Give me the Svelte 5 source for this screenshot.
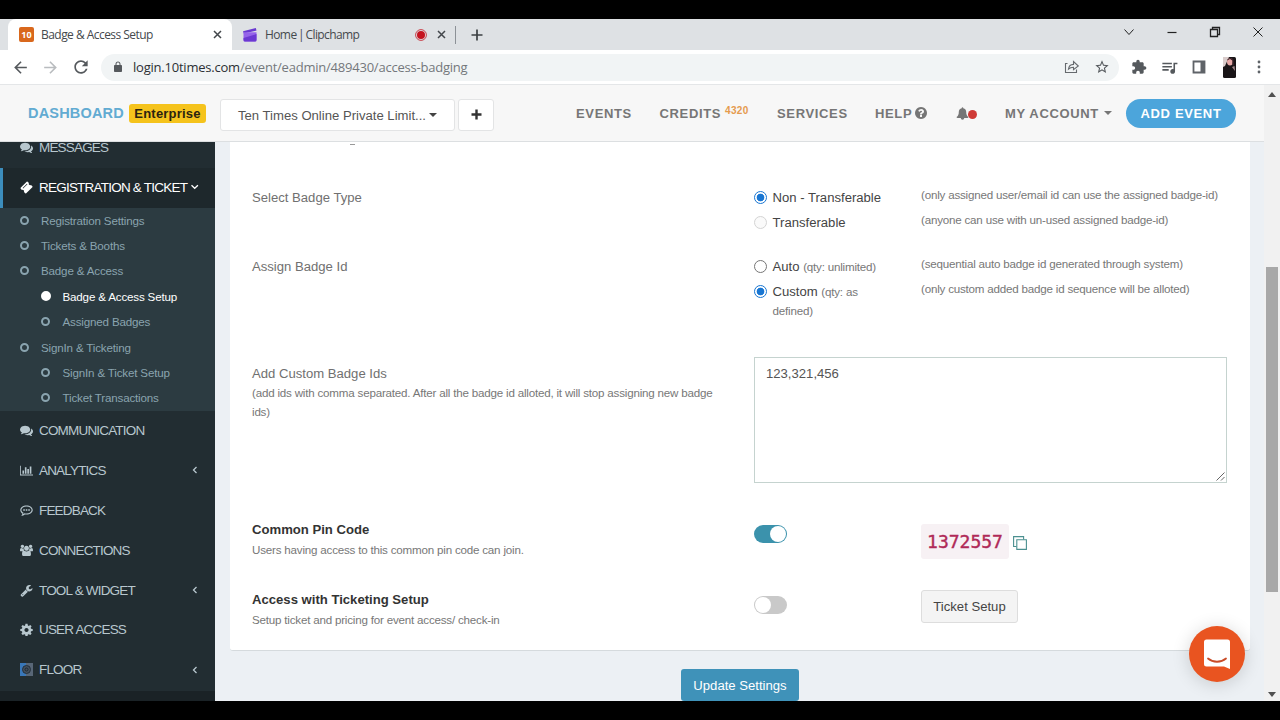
<script>
  const P = {
    comments: ['0 0 1792 1792', 'M1408 768q0 139-94 257t-256.5 186.5-353.5 68.5q-86 0-176-16-124 88-278 128-36 9-86 16h-3q-11 0-20.5-8t-11.5-21q-1-3-1-6.5t.5-6.5 2-6l2.5-5 3.5-5.5 4-5 4.5-5 4-4.5q5-6 23-25t26-29.5 22.5-29 25-38.5 20.5-44q-124-72-195-177t-71-224q0-139 94-257t256.5-186.5 353.5-68.5 353.5 68.5 256.5 186.5 94 257zm384 256q0 120-71 224.5t-195 176.5q10 24 20.5 44t25 38.5 22.5 29 26 29.5 23 25q1 1 4 4.5t4.5 5 4 5 3.5 5.5l2.5 5 2 6 .5 6.5-1 6.5q-3 14-13 22t-22 7q-50-7-86-16-154-40-278-128-90 16-176 16-271 0-472-132 58 4 88 4 161 0 309-45t264-129q125-92 192-212t67-254q0-77-23-152 129 71 204 178t75 230z'],
    chart: ['0 0 2048 1792', 'M640 896v512h-256v-512h256zm384-512v1024h-256v-1024h256zm1024 1152v128h-2048v-1536h128v1408h1920zm-640-896v768h-256v-768h256zm384-384v1152h-256v-1152h256z'],
    wrench: ['0 0 1792 1792', 'M448 1472q0-26-19-45t-45-19-45 19-19 45 19 45 45 19 45-19 19-45zm644-420l-682 682q-37 37-90 37-52 0-91-37l-106-108q-38-36-38-90 0-53 38-91l681-681q39 98 114.5 173.5t173.5 114.5zm634-435q0 39-23 106-47 134-164.5 217.5t-258.5 83.5q-185 0-316.5-131.5t-131.5-316.5 131.5-316.5 316.5-131.5q58 0 121.5 16.5t107.5 46.5q16 11 16 28t-16 28l-293 169v224l193 107q5-3 79-48.5t135.5-81 70.5-35.5q15 0 23.5 10t8.5 25z'],
    ticket: ['0 0 14 14', 'M8.2.7l1.4 1.4a1.6 1.6 0 0 0 2.2 2.2l1.5 1.4q.5.5 0 1L6.7 13.300q-.5.5-1 0l-1.500-1.400a1.6 1.6 0 0 0-2.200-2.200L.7 8.200q-.5-.5 0-1L7.200.7q.5-.5 1 0zM7.500 2.900L2.900 7.500l.5.5L8 3.400z'],
    feedback: ['0 0 14 14', 'M7 1.500C3.200 1.500.3 3.700.3 6.500c0 1.600.9 3 2.400 3.900-.2.900-.7 1.500-1.400 2.200 1.500 0 2.900-.6 3.900-1.400.6.1 1.200.2 1.800.2 3.800 0 6.700-2.200 6.700-4.900S10.800 1.500 7 1.500zm0 1.200c3.100 0 5.500 1.700 5.500 3.800s-2.400 3.700-5.500 3.700c-.7 0-1.500-.1-2.200-.3-.5.500-1.100.8-1.700 1 .3-.4.500-.9.700-1.400C2.400 8.800 1.500 7.700 1.500 6.500c0-2.100 2.400-3.800 5.500-3.800zM3.500 5.600h1.700v1.700H3.500zM6.200 5.600h1.700v1.700H6.200zM8.900 5.600h1.700v1.700H8.900z'],
    users: ['0 0 14 14', 'M2.600 .8a1.800 1.800 0 1 0 .01 0zM11.400 .8a1.800 1.800 0 1 0 .01 0zM7 2a2.600 2.600 0 1 0 .01 0zM0 7.200c0-1.500.3-2.800 1.400-2.800.4 0 .8.500 1.800.4.300 0 .5 0 .7-.1 0 1 .2 1.600.6 2.200-.8 0-1.500.3-2 .9H1.200c-.8 0-1.200-.2-1.200-.6zM14 7.200c0-1.500-.3-2.800-1.400-2.800-.4 0-.8.500-1.800.4-.3 0-.5 0-.7-.1 0 1-.2 1.600-.6 2.200.8 0 1.500.3 2 .9h1.300c.8 0 1.200-.2 1.200-.6zM2.200 11c0-2 .3-3.900 2.100-3.900.7 0 1.200.9 2.700.9s2-.9 2.700-.9c1.800 0 2.100 1.900 2.100 3.900 0 1.300-.7 2-1.900 2H4.100c-1.200 0-1.900-.7-1.900-2z'],
    cog: ['0 0 14 14', 'M5.900.900h2.200l.4 1.800 1 .4 1.500-1 1.500 1.500-1 1.500.4 1 1.800.4v2.100l-1.800.4-.4 1 1 1.500-1.500 1.500-1.500-1-1 .4-.4 1.800H5.900l-.4-1.800-1-.4-1.500 1L1.500 11.500l1-1.500-.4-1-1.800-.4V6.500l1.800-.4.4-1-1-1.500L3 2.100l1.500 1 1-.4zM7 5.300a2.200 2.200 0 1 0 .01 0z'],
    help: ['128 128 1536 1536', 'M1024 1376v-192q0-14-9-23t-23-9h-192q-14 0-23 9t-9 23v192q0 14 9 23t23 9h192q14 0 23-9t9-23zm256-672q0-88-55.5-163t-138.5-116-170-41q-243 0-371 213-15 24 8 42l132 100q7 6 19 6 16 0 25-12 53-68 86-92 34-24 86-24 48 0 85.500 26t37.500 59q0 38-20 61t-68 45q-63 28-115.500 86.500t-52.500 125.500v36q0 14 9 23t23 9h192q14 0 23-9t9-23q0-19 21.500-49.500t54.500-49.500q32-18 49-28.500t46-35 44.500-48 28-60.500 12.500-81zm384 192q0 209-103 385.500t-279.500 279.500-385.500 103-385.500-103-279.500-279.500-103-385.500 103-385.500 279.500-279.500 385.500-103 385.500 103 279.500 279.500 103 385.500z'],
    bell: ['0 0 14 14', 'M7 .3c.5 0 .8.300.8.800v.3c2.100.4 3.200 2 3.200 4 0 2.800.8 4.200 2.400 5.400 0 .6-.4 1-1 1H8.900a1.900 1.900 0 0 1-3.800 0H1.600c-.6 0-1-.4-1-1C2.200 9.600 3 8.200 3 5.400c0-2 1.100-3.600 3.200-4v-.3c0-.5.300-.8.8-.8z'],
    back: ['0 0 24 24', 'M20 11H7.830l5.590-5.590L12 4l-8 8 8 8 1.410-1.410L7.830 13H20v-2z'],
    forward: ['0 0 24 24', 'M4 11h12.170l-5.590-5.590L12 4l8 8-8 8-1.410-1.410L16.170 13H4v-2z'],
    reload: ['0 0 24 24', 'M17.650 6.350C16.200 4.900 14.210 4 12 4c-4.420 0-7.990 3.580-7.990 8s3.570 8 7.990 8c3.730 0 6.840-2.550 7.730-6h-2.080c-.82 2.330-3.040 4-5.650 4-3.310 0-6-2.690-6-6s2.690-6 6-6c1.660 0 3.140.690 4.220 1.780L13 11h7V4l-2.350 2.350z'],
    lock: ['0 0 24 24', 'M18 8h-1V6c0-2.760-2.240-5-5-5S7 3.240 7 6v2H6c-1.100 0-2 .9-2 2v10c0 1.100.9 2 2 2h12c1.100 0 2-.9 2-2V10c0-1.100-.9-2-2-2zM9 8V6c0-1.660 1.340-3 3-3s3 1.340 3 3v2H9z'],
    star: ['0 0 24 24', 'M22 9.240l-7.190-.62L12 2 9.190 8.630 2 9.240l5.460 4.730L5.820 21 12 17.270 18.180 21l-1.630-7.030L22 9.240zM12 15.400l-3.760 2.270 1-4.280-3.320-2.880 4.380-.38L12 6.100l1.710 4.040 4.380.38-3.320 2.880 1 4.280L12 15.400z'],
    puzzle: ['0 0 24 24', 'M20.500 11H19V7c0-1.100-.9-2-2-2h-4V3.500C13 2.120 11.880 1 10.500 1S8 2.120 8 3.500V5H4c-1.100 0-1.990.9-1.990 2v3.800H3.500c1.490 0 2.700 1.210 2.700 2.700s-1.210 2.700-2.700 2.700H2V20c0 1.100.9 2 2 2h3.800v-1.500c0-1.490 1.210-2.700 2.700-2.700 1.490 0 2.700 1.210 2.700 2.700V22H17c1.100 0 2-.9 2-2v-4h1.500c1.380 0 2.500-1.120 2.500-2.500S21.880 11 20.500 11z'],
    queue: ['0 0 24 24', 'M15 6H3v2h12V6zm0 4H3v2h12v-2zM3 16h8v-2H3v2zM17 6v8.180c-.31-.11-.65-.18-1-.18-1.660 0-3 1.340-3 3s1.340 3 3 3 3-1.340 3-3V8h3V6h-5z']
  };
  const evenodd = ['cog', 'ticket', 'feedback'];
  const sub = [
    { t: 'Registration Settings' },
    { t: 'Tickets & Booths' },
    { t: 'Badge & Access' },
    { t: 'Badge & Access Setup', deep: true, on: true },
    { t: 'Assigned Badges', deep: true },
    { t: 'SignIn & Ticketing' },
    { t: 'SignIn & Ticket Setup', deep: true },
    { t: 'Ticket Transactions', deep: true }
  ];
  const menu = [
    { t: 'COMMUNICATION', i: 'comments' },
    { t: 'ANALYTICS', i: 'chart', more: true },
    { t: 'FEEDBACK', i: 'feedback' },
    { t: 'CONNECTIONS', i: 'users' },
    { t: 'TOOL & WIDGET', i: 'wrench', more: true },
    { t: 'USER ACCESS', i: 'cog' },
    { t: 'FLOOR', i: 'floor', more: true }
  ];
</script>

{#snippet icon(name, size)}
  <svg width={size} height={size} viewBox={P[name][0]} fill="currentColor" fill-rule={evenodd.includes(name) ? 'evenodd' : 'nonzero'}><path d={P[name][1]} /></svg>
{/snippet}

<div class="screen">
  <div class="tabs">
    <div class="tab active">
      <span class="fav">10</span>
      <span class="ttl t1">Badge &amp; Access Setup</span>
      <svg class="x" width="9" height="9" viewBox="0 0 9 9"><path d="M1 1l7 7M8 1L1 8" /></svg>
    </div>
    <div class="tab second">
      <svg width="14" height="14" viewBox="0 0 14 14"><path d="M0 3.200L12.800 0l.7 2.600L.7 5.400z" fill="#6a39d0" /><path d="M.5 4.300h13V12a1.500 1.500 0 0 1-1.500 1.500H2A1.500 1.500 0 0 1 .5 12z" fill="#9563ea" /><path d="M.5 10L13.500 6v6a1.500 1.500 0 0 1-1.500 1.500H2A1.500 1.500 0 0 1 .5 12z" fill="#6b39d2" /></svg>
      <span class="ttl t2">Home | Clipchamp</span>
      <svg class="rec" width="12" height="12" viewBox="0 0 12 12"><circle cx="6" cy="6" r="5.400" fill="none" stroke="#c9404a" /><circle cx="6" cy="6" r="4" fill="#c5131f" /></svg>
      <svg class="x" width="9" height="9" viewBox="0 0 9 9"><path d="M1 1l7 7M8 1L1 8" /></svg>
    </div>
    <span class="vsep"></span>
    <svg class="plus" width="12" height="12" viewBox="0 0 12 12"><path d="M6 0.500v11M.5 6h11" /></svg>
    <div class="win">
      <svg width="12" height="12" viewBox="0 0 12 12"><path d="M1.500 3.500L6 8.500l4.500-5" /></svg>
      <svg width="12" height="12" viewBox="0 0 12 12"><path d="M1.500 6.500h9" stroke-width="1.200" /></svg>
      <svg width="12" height="12" viewBox="0 0 12 12"><path d="M1.500 3.500h7v7h-7zM3.500 3.500v-2h7v7h-2" stroke-width="1.300" /></svg>
      <svg width="12" height="12" viewBox="0 0 12 12"><path d="M1.500 1.500l9 9M10.500 1.500l-9 9" /></svg>
    </div>
  </div>

  <div class="toolbar">
    <span class="nav">{@render icon('back', 19)}</span>
    <span class="nav dim">{@render icon('forward', 19)}</span>
    <span class="nav">{@render icon('reload', 20)}</span>
    <div class="omni">
      {@render icon('lock', 12)}
      <span class="url"><b>login.10times.com</b>/event/eadmin/489430/access-badging</span>
      <svg class="share" width="16" height="14" viewBox="0 0 16 14"><path d="M3.500 3.500h-2v9h11v-3" /><path d="M4.500 9c.4-3 2.300-4.500 5-4.600V1.600L14.300 6 9.500 9.700V7.200C7.500 7.200 5.800 7.700 4.500 9z" /></svg>
      {@render icon('star', 16)}
    </div>
    <div class="ext">
      {@render icon('puzzle', 16)}
      {@render icon('queue', 19)}
      <svg width="14" height="14" viewBox="0 0 14 14"><path d="M1.500 1.500h11v11h-11z" fill="none" stroke="#5f6368" stroke-width="1.800" /><path d="M8.500 1h4.500v12H8.500z" fill="#5f6368" /></svg>
      <svg width="13" height="21" viewBox="0 0 13 21"><rect width="13" height="21" rx="1.500" fill="#191517" /><path d="M0 0h6L2 9 0 10z" fill="#d9cccb" /><ellipse cx="7" cy="4.700" rx="3" ry="3.800" fill="#e9aaa8" /><path d="M4 3.500C4.500.500 9 0 10.500 2.500L11 9 9.200 7 9.300 3.500 7 2z" fill="#3a2228" /><path d="M9 10l2.500-1 .5 5z" fill="#a98c90" /></svg>
      <svg width="4" height="14" viewBox="0 0 4 14" fill="#5f6368"><circle cx="2" cy="2" r="1.400" /><circle cx="2" cy="7" r="1.400" /><circle cx="2" cy="12" r="1.400" /></svg>
    </div>
  </div>

  <div class="view">
    <div class="page">
      <header>
        <span class="brand">DASHBOARD</span>
        <span class="plan">Enterprise</span>
        <div class="org"><span>Ten Times Online Private Limit...</span><i class="caret"></i></div>
        <div class="add"><svg width="11" height="11" viewBox="0 0 11 11"><path d="M5.500 0.500v10M.5 5.500h10" stroke="#333" stroke-width="2.400" /></svg></div>
        <nav>
          <span>EVENTS</span>
          <span>CREDITS<sup>4320</sup></span>
          <span>SERVICES</span>
          <span class="help">HELP {@render icon('help', 12)}</span>
          <span class="bell">{@render icon('bell', 13)}<i></i></span>
          <span class="acct">MY ACCOUNT<i class="caret"></i></span>
          <span class="cta">ADD EVENT</span>
        </nav>
      </header>

      <div class="body">
        <aside>
          <div class="item first">{@render icon('comments', 13)}<span>MESSAGES</span></div>
          <div class="item open">{@render icon('ticket', 13)}<span>REGISTRATION &amp; TICKET</span><svg class="chev" width="8" height="8" viewBox="0 0 8 8"><path d="M.5 2.300l3.200 3 3.200-3" /></svg></div>
          <div class="sub">
            {#each sub as s}
              <div class="srow" class:deep={s.deep} class:on={s.on}><i></i><span>{s.t}</span></div>
            {/each}
          </div>
          {#each menu as m}
            <div class="item">
              {#if m.i === 'floor'}
                <svg width="13" height="13" viewBox="0 0 13 13"><rect width="13" height="13" fill="#586676" /><rect width="6" height="13" fill="#3977b8" /><circle cx="6.500" cy="6.500" r="4" fill="#45505c" stroke="#222f3b" /><circle cx="6.500" cy="6.500" r="1.500" fill="none" stroke="#1c2935" /></svg>
              {:else}
                {@render icon(m.i, 13)}
              {/if}
              <span>{m.t}</span>
              {#if m.more}<svg class="chev" width="8" height="8" viewBox="0 0 8 8"><path d="M5.500 1l-3 3 3 3" /></svg>{/if}
            </div>
          {/each}
        </aside>

        <main>
          <section class="card">
            <i class="clip"></i>
            <div class="row r1">
              <div class="lab">Select Badge Type</div>
              <div class="opts">
                <div class="opt"><i class="radio sel"></i><span>Non - Transferable</span></div>
                <div class="opt"><i class="radio off"></i><span>Transferable</span></div>
              </div>
              <div class="notes"><p>(only assigned user/email id can use the assigned badge-id)</p><p>(anyone can use with un-used assigned badge-id)</p></div>
            </div>
            <div class="row r2">
              <div class="lab">Assign Badge Id</div>
              <div class="opts">
                <div class="opt"><i class="radio"></i><span>Auto <small>(qty: unlimited)</small></span></div>
                <div class="opt"><i class="radio sel"></i><span>Custom <small>(qty: as<br />defined)</small></span></div>
              </div>
              <div class="notes"><p>(sequential auto badge id generated through system)</p><p>(only custom added badge id sequence will be alloted)</p></div>
            </div>
            <div class="row r3">
              <div class="lab"><div>Add Custom Badge Ids</div><small>(add ids with comma separated. After all the badge id alloted, it will stop assigning new badge<br />ids)</small></div>
              <div class="area"><span>123,321,456</span><svg width="9" height="9" viewBox="0 0 9 9"><path d="M.5 8.500l8-8M5 8.500L8.500 5" stroke="#666" /></svg></div>
            </div>
            <div class="row r4">
              <div class="lab"><b>Common Pin Code</b><small>Users having access to this common pin code can join.</small></div>
              <div><span class="toggle tog-on"></span></div>
              <div class="pin"><code>1372557</code><svg width="14" height="14" viewBox="0 0 14 14"><path d="M3.800 3.800h9.600v9.600H3.800z" /><path d="M3.500 10.500H.6V.6h10v3" /></svg></div>
            </div>
            <div class="row r5">
              <div class="lab"><b>Access with Ticketing Setup</b><small>Setup ticket and pricing for event access/ check-in</small></div>
              <div><span class="toggle"></span></div>
              <div><span class="btn">Ticket Setup</span></div>
            </div>
          </section>
          <div class="update">Update Settings</div>
        </main>
      </div>
    </div>
    <div class="scroll"><i class="up"></i><span class="thumb"></span><i class="down"></i></div>
  </div>

  <div class="chat"><svg width="28" height="31" viewBox="0 0 28 31"><path d="M3.500.500h21A2.500 2.500 0 0 1 27 3v27l-6-2.500H3.500A2.500 2.500 0 0 1 1 25V3A2.500 2.500 0 0 1 3.500.5z" fill="#fff" /><path d="M5 19.500c5 4.300 13 4.300 18 0" fill="none" stroke="#c94b27" stroke-width="1.800" stroke-linecap="round" /></svg></div>
</div>

<style>
  :global(body) { background: #000; overflow: hidden; }
  .screen { box-sizing: border-box; width: 1280px; height: 720px; padding: 19px 0; background: #000; font-family: "Liberation Sans", Arial, sans-serif; font-size: 13.125px; color: #333; position: relative; white-space: nowrap; overflow: hidden; }
  .screen * { box-sizing: border-box; }
  svg { display: block; flex: none; }
  .tabs { height: 31px; background: #dee1e4; display: flex; align-items: center; padding-left: 8px; font-family: "Open Sans", sans-serif; }
  .tab { display: flex; align-items: center; height: 31px; }
  .active { width: 224px; background: #fff; border-radius: 8px 8px 0 0; padding-left: 11px; }
  .fav { width: 15px; height: 15px; background: #d9681d; border-radius: 2px; color: #fff; font-size: 9px; font-weight: 700; line-height: 15px; text-align: center; margin-right: 7px; }
  .ttl { font-size: 12px; color: #45494d; line-height: 16px; }
  .t1 { width: 172px; letter-spacing: -0.54px; }
  .x { fill: none; stroke: #43474b; stroke-width: 1.5; }
  .second { width: 223px; padding-left: 11px; }
  .t2 { margin-left: 8px; width: 150px; letter-spacing: -0.6px; word-spacing: -1px; }
  .rec { margin-right: 10px; }
  .vsep { width: 1px; height: 18px; background: #8c9196; }
  .plus { margin-left: 15px; fill: none; stroke: #3c4043; stroke-width: 1.7; }
  .win { margin-left: auto; display: flex; gap: 31px; padding-right: 16px; padding-bottom: 5px; }
  .win svg { fill: none; stroke: #222; stroke-width: 1; }

  .toolbar { height: 35px; background: #fff; display: flex; align-items: center; padding-left: 11px; border-bottom: 1px solid #e4e6e8; color: #55595d; }
  .nav { width: 30px; height: 20px; display: flex; align-items: center; }
  .dim { color: #b9bcbf; }
  .omni { width: 1018px; height: 27px; border-radius: 14px; background: #f1f4f5; display: flex; align-items: center; padding-left: 11px; }
  .url { margin-left: 9px; width: 930px; font: 13px "Open Sans", sans-serif; color: #74787c; letter-spacing: -0.22px; }
  .url b { font-weight: 400; color: #2c3034; }
  .share { fill: none; stroke: #666a6e; stroke-width: 1.1; margin: 0 14px 0 1px; }
  .ext { display: flex; align-items: center; margin-left: 12px; }
  .ext :global(svg:nth-child(2)) { margin-left: 13px; }
  .ext :global(svg:nth-child(3)) { margin-left: 13px; }
  .ext :global(svg:nth-child(4)) { margin-left: 17px; }
  .ext :global(svg:nth-child(5)) { margin-left: 21px; }

  .view { height: 616px; display: flex; }
  .page { width: 1264px; display: flex; flex-direction: column; }
  header { height: 57px; flex: none; background: #f7f7f7; border-bottom: 1px solid #dcdfe1; display: flex; align-items: center; padding-left: 28px; }
  .brand { width: 101px; font-weight: 700; font-size: 14.5px; color: #62abd2; letter-spacing: 0.18px; }
  .plan { width: 77px; height: 19px; line-height: 19px; text-align: center; background: #f5c31c; border-radius: 3px; font-weight: 700; font-size: 13px; color: #2b2410; letter-spacing: 0.2px; }
  .org { margin: 3px 0 0 14px; width: 235px; height: 32px; border: 1px solid #e3e4e5; border-radius: 3px; background: #fff; display: flex; align-items: center; padding-left: 17px; padding-top: 1px; color: #555; }
  .org span { width: 191px; }
  .caret { border: 4px solid transparent; border-top-color: #444; border-bottom: 0; }
  .add { margin: 3px 0 0 3px; width: 36px; height: 32px; border: 1px solid #e3e4e5; border-radius: 3px; background: #fff; display: flex; align-items: center; justify-content: center; }
  nav { margin-left: 82px; display: grid; grid-template-columns: 83.500px 117.500px 98px 81px 49px 121px 110px; align-items: center; font-weight: 700; font-size: 13px; color: #767676; letter-spacing: 0.65px; height: 29px; }
  sup { color: #e59b4e; font-size: 10px; letter-spacing: 0.3px; margin-left: 4px; vertical-align: 4px; line-height: 0; }
  .help, .bell, .acct { display: flex; align-items: center; }
  .help :global(svg) { margin-left: 3px; }
  .bell i { width: 9px; height: 9px; border-radius: 50%; background: #cf3a36; margin-top: 2px; margin-left: -1px; }
  .acct .caret { border-top-color: #767676; margin-left: 5px; }
  .cta { height: 29px; line-height: 29px; border-radius: 15px; background: #4ca5db; color: #fff; text-align: center; letter-spacing: 0.65px; }

  .body { display: flex; height: 559px; overflow: hidden; }
  aside { width: 215px; background: #222d32; color: #b8c7ce; border-bottom: 10px solid #1a2226; overflow: hidden; }
  .item { height: 39.900px; display: flex; align-items: center; padding-left: 20px; padding-bottom: 1px; font-size: 13.5px; }
  .item span { margin-left: 6px; letter-spacing: -0.82px; width: 153px; }
  .first { height: 40px; margin-top: -14px; padding-bottom: 2px; }
  .open { background: #1e282c; border-left: 3px solid #3c8dbc; padding-left: 17px; padding-bottom: 2px; color: #fff; height: 40px; }
  .open span { letter-spacing: -0.78px; }
  .chev { fill: none; stroke: currentColor; stroke-width: 1.3; margin-left: -1px; }
  .sub { height: 203px; background: #2c3b41; }
  .srow { height: 25.400px; display: flex; align-items: center; padding-left: 20px; padding-bottom: 1px; font-size: 11.6px; letter-spacing: -0.17px; color: #8aa4af; }
  .srow i { width: 9px; height: 9px; border: 2px solid #8aa4af; border-radius: 50%; }
  .srow span { margin-left: 12px; }
  .deep { padding-left: 41px; }
  .deep span { margin-left: 12.500px; }
  .on { color: #fff; }
  .on i { background: #fff; border-color: #fff; width: 10px; height: 10px; margin-right: -1px; }

  main { flex: 1; background: #ecf0f4; padding: 0 14px 0 15px; display: flex; flex-direction: column; align-items: center; }
  .card { width: 1020px; height: 509px; flex: none; background: #fff; border-bottom: 1px solid #d5dadd; border-radius: 0 0 3px 3px; padding: 1px 22px 0; display: grid; grid-template-rows: 42px 69px 103px 161px 71px 1fr; }
  .clip { width: 5px; height: 1px; background: #999; margin-left: 98px; margin-top: 1px; }
  .row { display: grid; grid-template-columns: 502px 167px 309px; align-items: start; }
  .lab { color: #707070; line-height: 24px; }
  small, .notes p { font-size: 11.6px; color: #777; letter-spacing: -0.2px; }
  .r1 .lab, .r2 .lab { padding-top: 1px; }
  .lab small { display: block; line-height: 19px; }
  .notes p { margin: 0; height: 25px; line-height: 20px; }
  .opt { display: flex; line-height: 25px; height: 25px; color: #444; }
  .opt small { line-height: 19px; }
  .opt:nth-child(2) span { line-height: 19px; padding-top: 3px; }
  .radio { width: 13px; height: 13px; border: 1px solid #767676; border-radius: 50%; margin: 6px 5.500px 0 0; flex: none; }
  .sel { border: 1.500px solid #1976d2; background: radial-gradient(circle, #1976d2 0 3.500px, #fff 4.200px); }
  .off { border-color: #d4d4d4; background: #fafafa; }
  .r3 { grid-template-columns: 502px 473px; }
  .r3 .lab { padding-top: 5px; }
  .r3 .lab small { margin-top: -3px; }
  .area { height: 126px; border: 1px solid #c5d3cf; padding: 8px 11px; line-height: 15px; position: relative; color: #555; }
  .area svg { position: absolute; right: 1px; bottom: 1px; }
  .lab b { display: block; color: #333; line-height: 20px; }
  .r4 { padding-top: 1.500px; }
  .r5 { padding-top: 1px; }
  .toggle { display: block; width: 33px; height: 18px; border-radius: 9px; background: #c9c9c9; margin-top: 6px; padding: 1px; }
  .toggle::before { content: ""; display: block; width: 16px; height: 16px; border-radius: 50%; background: #fff; }
  .tog-on { background: #3b92ac; margin-top: 5.500px; }
  .tog-on::before { margin-left: 15px; }
  .pin { display: flex; align-items: center; margin-top: 4.500px; }
  code { width: 88px; height: 35px; background: #f7f1f4; border-radius: 3px; color: #b02a58; font: 400 18px/36px "DejaVu Sans Mono", monospace; text-align: center; -webkit-text-stroke: 0.400px #b02a58; }
  .pin svg { margin: 3px 0 0 4px; fill: none; stroke: #4b9090; stroke-width: 1.1; }
  .btn { display: block; width: 97px; height: 33px; line-height: 31px; border: 1px solid #ddd; border-radius: 3px; background: #f4f4f4; color: #444; text-align: center; }
  .update { margin: 18px 0 0; width: 118px; height: 32px; flex: none; line-height: 33px; border-radius: 3px; background: #3f92b9; color: #fff; text-align: center; }

  .scroll { width: 16px; background: #f1f1f1; display: flex; flex-direction: column; align-items: center; padding: 7px 0 4px; }
  .up { border: 4px solid transparent; border-bottom: 5px solid #505050; border-top: 0; }
  .down { border: 4px solid transparent; border-top: 5px solid #505050; border-bottom: 0; }
  .thumb { width: 12px; height: 325px; background: #a8a8a8; margin: 170px 0 auto; }
  .chat { position: absolute; left: 1189px; top: 626px; width: 56px; height: 56px; border-radius: 50%; background: #e95420; display: flex; align-items: center; justify-content: center; box-shadow: 0 2px 18px rgba(0, 0, 0, 0.16); }
</style>
